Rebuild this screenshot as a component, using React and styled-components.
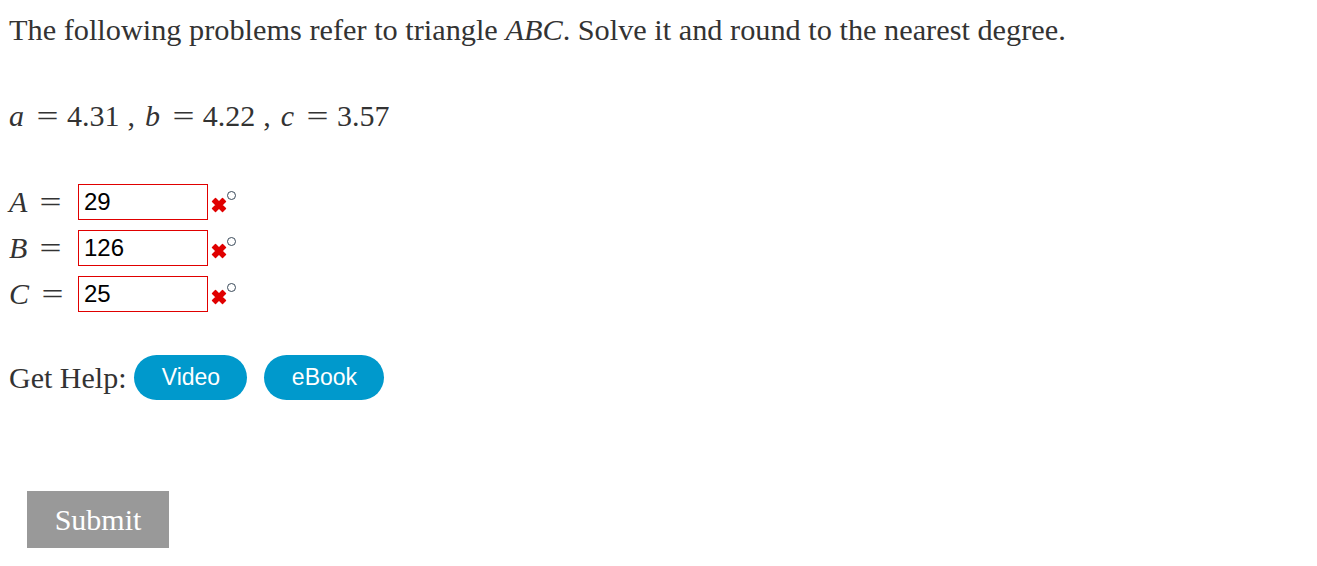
import React from "react";
import styled, { createGlobalStyle } from "styled-components";

const Global = createGlobalStyle`
  html, body { margin: 0; padding: 0; background: #fff; }
  body { padding: 8px; font-family: "Liberation Serif", "Times New Roman", serif; color: #333; }
`;

const Page = styled.div`
  display: flex;
  flex-direction: column;
  font-size: 30px;
  line-height: 1.2;
`;

const Prompt = styled.p`
  margin: 4px 0 0 1px;
  font-size: 30.3px;
`;

const Given = styled.div`
  margin: 50px 0 0 1px;
  font-size: 30px;
  display: flex;
  align-items: baseline;
`;

const V = styled.i`
  font-family: "Liberation Serif", serif;
  font-style: italic;
`;

const Op = styled.span`
  display: inline-block;
  transform: scaleX(1.3);
  margin: 0 ${(p) => p.r ?? 11}px 0 ${(p) => p.l ?? 15}px;
`;

const Sep = styled.span`
  margin: 0 10px 0 8px;
`;

const Answers = styled.div`
  margin-top: 50px;
  display: flex;
  flex-direction: column;
  gap: 10px;
`;

const Row = styled.div`
  display: flex;
  align-items: center;
  height: 36px;
`;

const Label = styled.span`
  width: 69px;
  display: flex;
  align-items: baseline;
  padding-left: 1px;
`;

const Box = styled.input`
  box-sizing: border-box;
  width: 130px;
  height: 36px;
  border: 1px solid #e00000;
  outline: none;
  padding: 0 5px;
  font-family: "Liberation Sans", Arial, sans-serif;
  font-size: 24px;
  color: #000;
  background: #fff;
`;

const Mark = styled.span`
  display: flex;
  align-items: flex-start;
  margin-left: 3px;
  height: 30px;
`;

const Deg = styled.span`
  box-sizing: border-box;
  width: 9px;
  height: 9px;
  border: 1px solid #3a4a5a;
  border-radius: 50%;
  margin-left: 0;
  margin-top: 4px;
`;

const Help = styled.div`
  margin-top: 43px;
  display: flex;
  align-items: center;
  padding-left: 1px;
`;

const HelpBtn = styled.button`
  height: 45px;
  width: ${(p) => p.w}px;
  border: none;
  border-radius: 23px;
  background: #0099cc;
  color: #fff;
  font-family: "Liberation Sans", Arial, sans-serif;
  font-size: 23px;
  margin-left: ${(p) => p.ml}px;
  padding: 0;
`;

const Submit = styled.button`
  margin: 91px 0 0 19px;
  align-self: flex-start;
  width: 142px;
  height: 57px;
  border: none;
  background: #999;
  color: #fff;
  font-family: "Liberation Serif", serif;
  font-size: 30px;
  padding: 0;
`;

const Cross = () => (
  <svg width="16" height="16" viewBox="0 0 16 16" style={{ marginTop: 10 }}>
    <path
      d="M1.5 4.5 L4.5 1.5 L8 5 L11.5 1.5 L14.5 4.5 L11 8 L14.5 11.5 L11.5 14.5 L8 11 L4.5 14.5 L1.5 11.5 L5 8 Z"
      fill="#e00000"
      stroke="#e00000"
      strokeWidth="1.4"
      strokeLinejoin="round"
    />
  </svg>
);

const rows = [
  ["A", "29"],
  ["B", "126"],
  ["C", "25"],
];

export default function App() {
  return (
    <Page>
      <Global />
      <Prompt>
        The following problems refer to triangle <V>ABC</V>. Solve it and round to the nearest degree.
      </Prompt>
      <Given>
        <V>a</V><Op>=</Op>4.31<Sep>,</Sep><V>b</V><Op>=</Op>4.22<Sep>,</Sep><V>c</V><Op>=</Op>3.57
      </Given>
      <Answers>
        {rows.map(([l, v]) => (
          <Row key={l}>
            <Label>
              <V>{l}</V>
              <Op l={15}>=</Op>
            </Label>
            <Box defaultValue={v} />
            <Mark>
              <Cross />
              <Deg />
            </Mark>
          </Row>
        ))}
      </Answers>
      <Help>
        Get Help:
        <HelpBtn w={113} ml={8}>Video</HelpBtn>
        <HelpBtn w={120} ml={17}>eBook</HelpBtn>
      </Help>
      <Submit>Submit</Submit>
    </Page>
  );
}
